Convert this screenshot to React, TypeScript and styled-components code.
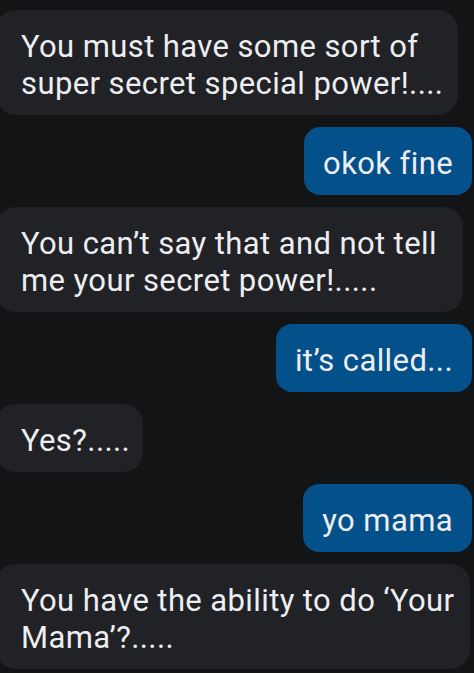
import React from 'react';
import styled, {createGlobalStyle} from 'styled-components';

const $BG = '#131416';
const $GRAY_BUBBLE = '#212226';
const $BLUE_BUBBLE = '#03508a';
const $TEXT = '#eceef1';

const GlobalStyle = createGlobalStyle`
  html, body {
    margin: 0;
    padding: 0;
    background: ${$BG};
  }

  body {
    width: 474px;
    height: 673px;
    overflow: hidden;
    font-family: Roboto, "Noto Sans", "Liberation Sans", sans-serif;
  }
`;

const StyledThread = styled.ul`
  display: flex;
  flex-direction: column;
  gap: 12px;
  margin: 0;
  padding: 10px 0 0 0;
  list-style: none;
`;

const StyledBubble = styled.li<{$mine: boolean; $width?: number}>`
  align-self: ${({$mine}) => ($mine ? 'flex-end' : 'flex-start')};
  box-sizing: border-box;
  width: ${({$width}) => ($width ? `${$width}px` : 'fit-content')};
  margin: ${({$mine}) => ($mine ? '0 2px 0 0' : '0 0 0 -4px')};
  padding: ${({$mine}) => ($mine ? '18px 19px 13px 19px' : '18px 10px 13px 25px')};
  border-radius: ${({$mine}) => ($mine ? '16px' : '20px')};
  background: ${({$mine}) => ($mine ? $BLUE_BUBBLE : $GRAY_BUBBLE)};
  color: ${$TEXT};
  font-size: 31px;
  letter-spacing: 0.4px;
  line-height: 37px;
  white-space: pre-line;
`;

interface IMessage {
  mine: boolean;
  text: string;
  width?: number;
}

const MESSAGES: IMessage[] = [
  {mine: false, text: 'You must have some sort of\nsuper secret special power!....', width: 462},
  {mine: true, text: 'okok fine'},
  {mine: false, text: 'You can\u2019t say that and not tell\nme your secret power!.....', width: 467},
  {mine: true, text: 'it\u2019s called...'},
  {mine: false, text: 'Yes?.....', width: 147},
  {mine: true, text: 'yo mama'},
  {mine: false, text: 'You have the ability to do \u2018Your\nMama\u2019?.....', width: 474}
];

const App: React.FC = () => (
  <>
    <GlobalStyle />
    <StyledThread>
      {MESSAGES.map((message, i) => (
        <StyledBubble key={i} $mine={message.mine} $width={message.width}>
          {message.text}
        </StyledBubble>
      ))}
    </StyledThread>
  </>
);

export default App;
